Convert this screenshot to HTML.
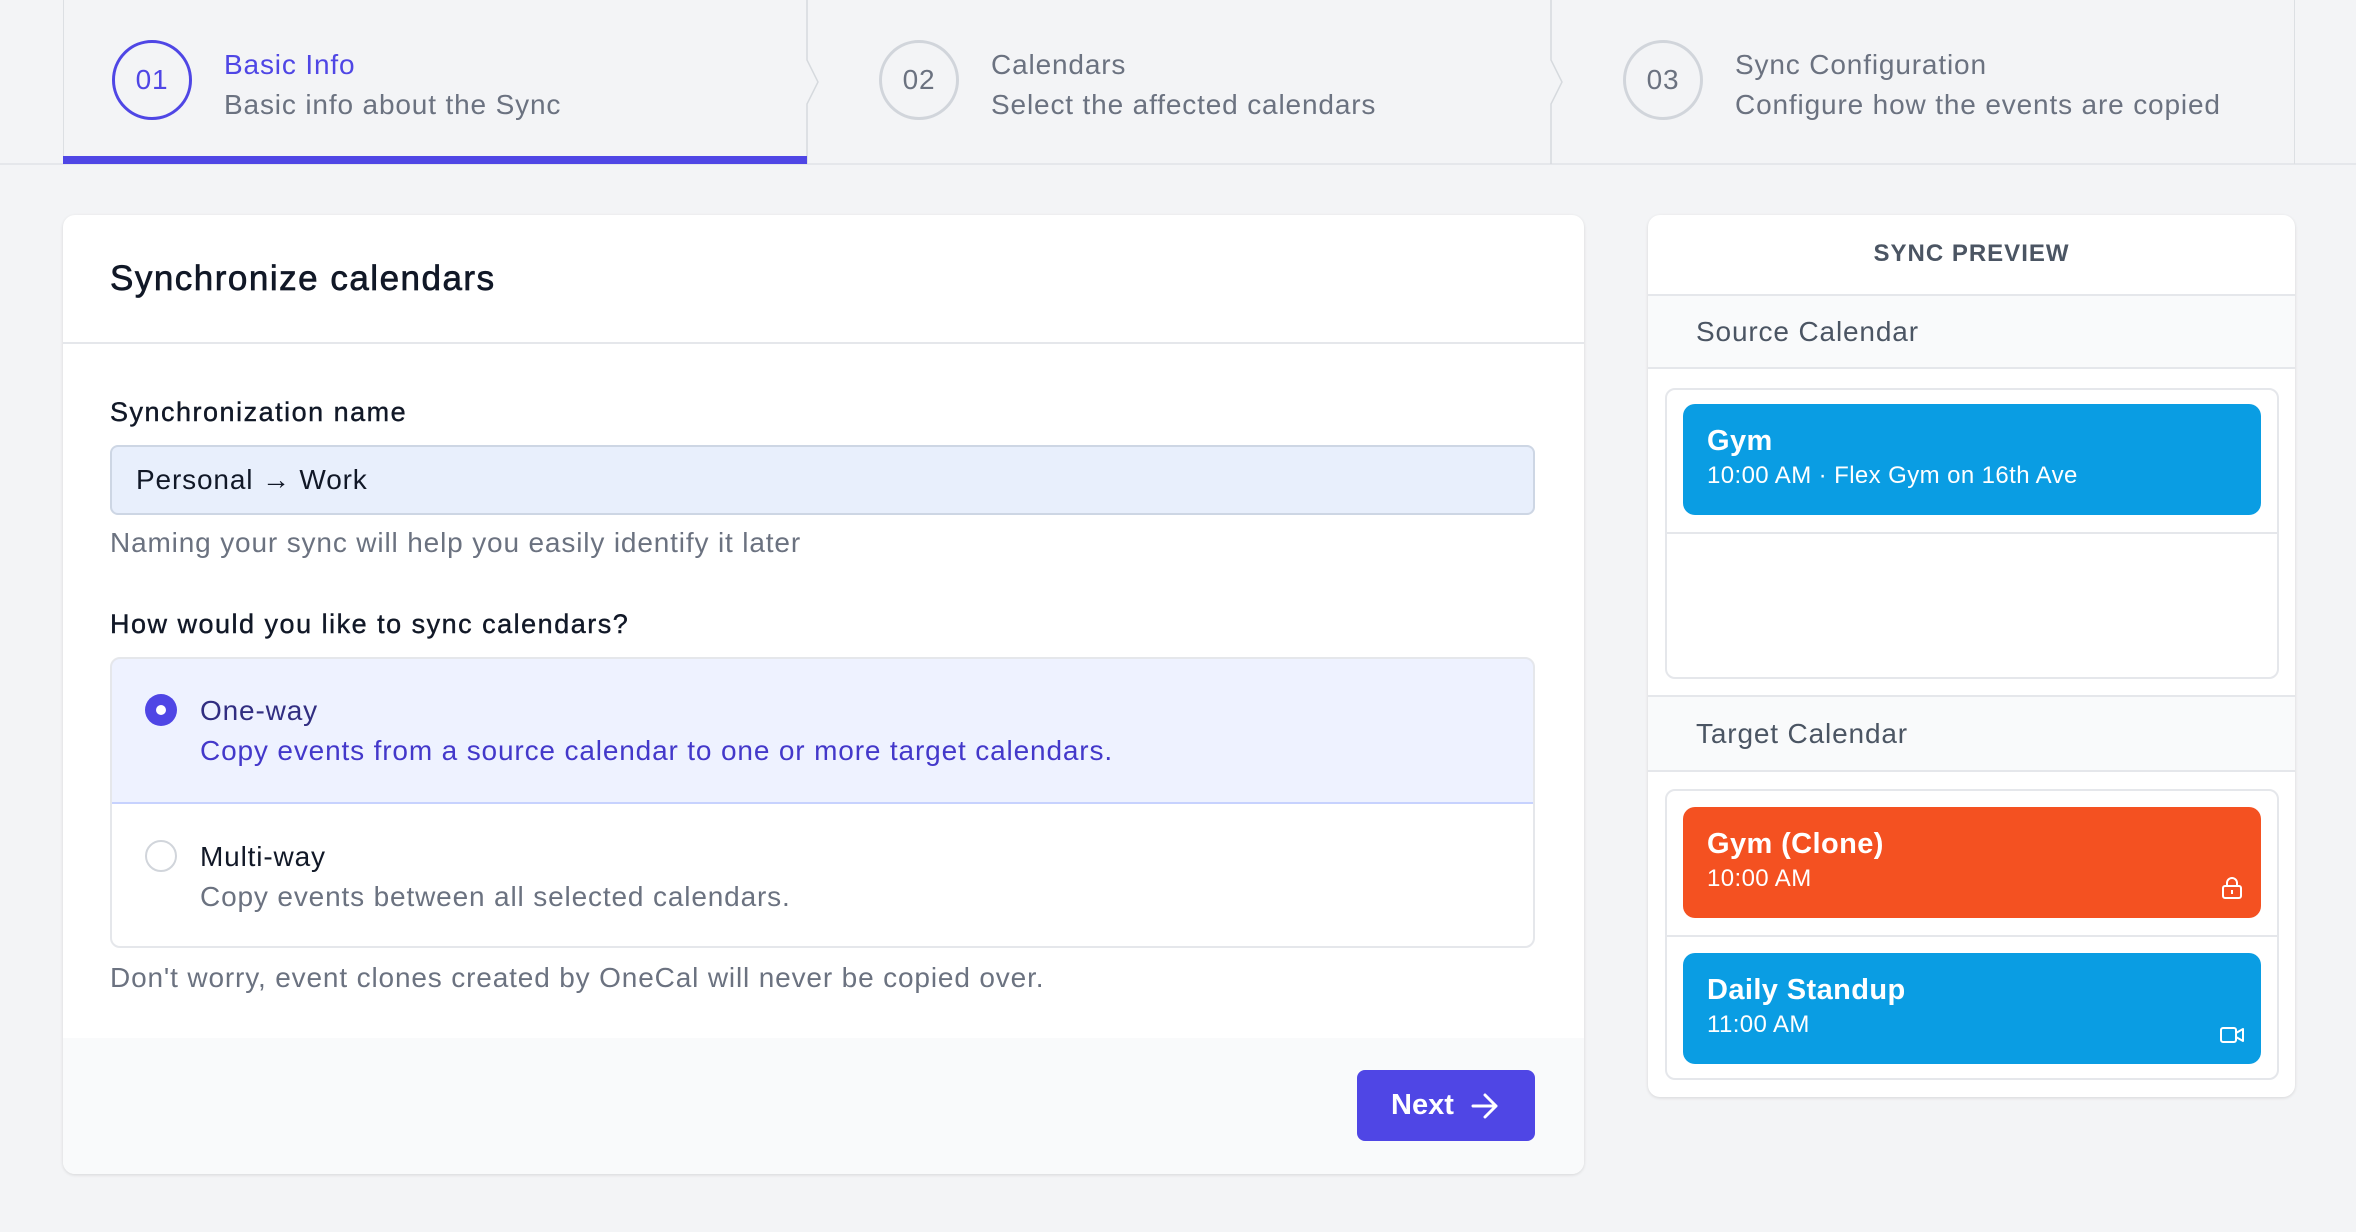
<!DOCTYPE html>
<html><head><meta charset="utf-8"><style>
*{box-sizing:border-box;margin:0;padding:0}
body{width:2356px;height:1232px;background:#f3f4f6;font-family:"Liberation Sans",sans-serif;position:relative;overflow:hidden;letter-spacing:0.85px}
.a{position:absolute;white-space:nowrap}
.circ{position:absolute;width:80px;height:80px;border-radius:50%;border:3px solid #d1d5db;display:flex;align-items:center;justify-content:center;font-size:28px;color:#6b7280}
.t1{font-size:28px;color:#6b7280}
.t2{font-size:28px;color:#6b7280}
.card{position:absolute;background:#fff;border-radius:12px;box-shadow:0 1px 3px rgba(0,0,0,.12);overflow:hidden}
.ev{position:absolute;left:16px;right:16px;height:111px;border-radius:12px;color:#fff;padding:20px 24px;letter-spacing:0.4px}
.ev b{display:block;font-size:29px;line-height:34px}
.ev span{display:block;font-size:24px;line-height:36px}
.lbl{font-size:27px;color:#111827;letter-spacing:1.5px;-webkit-text-stroke:0.4px #111827}
</style></head><body>
<div class="a" style="left:0;top:163px;width:2356px;height:2px;background:#e5e7eb"></div>
<div class="a" style="left:63px;top:0;width:1px;height:164px;background:#dcdfe3"></div>
<div class="a" style="left:2294px;top:0;width:1px;height:164px;background:#dcdfe3"></div>
<svg class="a" style="left:800px;top:0" width="24" height="164"><path d="M7 0V60L18 82L7 104V164" fill="none" stroke="#d6d9de" stroke-width="1.5"/></svg>
<svg class="a" style="left:1544px;top:0" width="24" height="164"><path d="M7 0V60L18 82L7 104V164" fill="none" stroke="#d6d9de" stroke-width="1.5"/></svg>
<div class="a" style="left:63px;top:156px;width:744px;height:8px;background:#4f46e5"></div>
<div class="circ" style="left:112px;top:40px;border-color:#4f46e5;color:#4f46e5">01</div>
<div class="a t1" style="left:224px;top:49px;color:#4f46e5">Basic Info</div>
<div class="a t2" style="left:224px;top:89px">Basic info about the Sync</div>
<div class="circ" style="left:879px;top:40px">02</div>
<div class="a t1" style="left:991px;top:49px">Calendars</div>
<div class="a t2" style="left:991px;top:89px">Select the affected calendars</div>
<div class="circ" style="left:1623px;top:40px">03</div>
<div class="a t1" style="left:1735px;top:49px">Sync Configuration</div>
<div class="a t2" style="left:1735px;top:89px">Configure how the events are copied</div>

<div class="card" style="left:63px;top:215px;width:1521px;height:959px">
  <div class="a" style="left:47px;top:44px;font-size:35px;color:#111827;letter-spacing:1.5px;-webkit-text-stroke:0.7px #111827">Synchronize calendars</div>
  <div class="a" style="left:0;top:127px;width:1521px;height:2px;background:#e5e7eb"></div>
  <div class="a lbl" style="left:47px;top:182px">Synchronization name</div>
  <div class="a" style="left:47px;top:230px;width:1425px;height:70px;background:#e8effc;border:2px solid #cdd6e4;border-radius:8px;padding:0 24px;line-height:66px;font-size:28px;color:#111827">Personal → Work</div>
  <div class="a" style="left:47px;top:312px;font-size:28px;color:#6b7280">Naming your sync will help you easily identify it later</div>
  <div class="a lbl" style="left:47px;top:394px">How would you like to sync calendars?</div>
  <div class="a" style="left:47px;top:442px;width:1425px;height:291px;border:2px solid #e5e7eb;border-radius:10px;overflow:hidden">
    <div class="a" style="left:-2px;top:-2px;width:1425px;height:147px;background:#eef2ff;border:2px solid #c7d2fe;border-radius:10px 10px 0 0"></div>
    <div class="a" style="left:33px;top:35px;width:32px;height:32px;border-radius:50%;background:#4f46e5"></div>
    <div class="a" style="left:44px;top:46px;width:10px;height:10px;border-radius:50%;background:#fff"></div>
    <div class="a" style="left:88px;top:36px;font-size:28px;color:#312e81">One-way</div>
    <div class="a" style="left:88px;top:76px;font-size:28px;color:#4338ca">Copy events from a source calendar to one or more target calendars.</div>
    <div class="a" style="left:33px;top:181px;width:32px;height:32px;border-radius:50%;border:2px solid #d1d5db"></div>
    <div class="a" style="left:88px;top:182px;font-size:28px;color:#111827">Multi-way</div>
    <div class="a" style="left:88px;top:222px;font-size:28px;color:#6b7280">Copy events between all selected calendars.</div>
  </div>
  <div class="a" style="left:47px;top:747px;font-size:28px;color:#6b7280">Don't worry, event clones created by OneCal will never be copied over.</div>
  <div class="a" style="left:0;top:823px;width:1521px;height:136px;background:#f9fafb"></div>
  <div class="a" style="left:1294px;top:855px;width:178px;height:71px;background:#4f46e5;border-radius:8px;color:#fff;font-size:29px;font-weight:bold;padding-left:34px;line-height:71px;letter-spacing:0">Next
    <svg style="position:absolute;left:114px;top:23px" width="28" height="26" viewBox="0 0 28 26"><path d="M2 13H25M14 2L25 13L14 24" fill="none" stroke="#fff" stroke-width="3" stroke-linecap="round" stroke-linejoin="round"/></svg>
  </div>
</div>

<div class="card" style="left:1648px;top:215px;width:647px;height:882px">
  <div class="a" style="left:0;top:25px;width:647px;text-align:center;font-size:24px;font-weight:bold;letter-spacing:1px;color:#4b5563">SYNC PREVIEW</div>
  <div class="a" style="left:0;top:79px;width:647px;height:75px;background:#f9fafb;border-top:2px solid #e5e7eb;border-bottom:2px solid #e5e7eb"></div>
  <div class="a" style="left:48px;top:101px;font-size:28px;color:#4b5563">Source Calendar</div>
  <div class="a" style="left:17px;top:173px;width:614px;height:291px;border:2px solid #e5e7eb;border-radius:10px">
    <div class="ev" style="top:14px;background:#0a9de3"><b>Gym</b><span>10:00 AM · Flex Gym on 16th Ave</span></div>
    <div class="a" style="left:0;top:142px;width:610px;height:2px;background:#e5e7eb"></div>
  </div>
  <div class="a" style="left:0;top:480px;width:647px;height:77px;background:#f9fafb;border-top:2px solid #e5e7eb;border-bottom:2px solid #e5e7eb"></div>
  <div class="a" style="left:48px;top:503px;font-size:28px;color:#4b5563">Target Calendar</div>
  <div class="a" style="left:17px;top:574px;width:614px;height:291px;border:2px solid #e5e7eb;border-radius:10px">
    <div class="ev" style="top:16px;background:#f45121"><b>Gym (Clone)</b><span>10:00 AM</span>
      <svg style="position:absolute;right:18px;bottom:18px" width="22" height="24" viewBox="0 0 22 24"><rect x="2" y="10" width="18" height="12" rx="2" fill="none" stroke="#fff" stroke-width="2"/><path d="M6 10V7a5 5 0 0 1 10 0v3" fill="none" stroke="#fff" stroke-width="2"/><rect x="10" y="14" width="2" height="4" fill="#fff"/></svg>
    </div>
    <div class="a" style="left:0;top:144px;width:610px;height:2px;background:#e5e7eb"></div>
    <div class="ev" style="top:162px;background:#0a9de3"><b>Daily Standup</b><span>11:00 AM</span>
      <svg style="position:absolute;right:16px;bottom:20px" width="26" height="18" viewBox="0 0 26 18"><rect x="2" y="2" width="15" height="14" rx="2" fill="none" stroke="#fff" stroke-width="2"/><path d="M17 7L24 3V15L17 11" fill="none" stroke="#fff" stroke-width="2" stroke-linejoin="round"/></svg>
    </div>
  </div>
</div>
</body></html>
